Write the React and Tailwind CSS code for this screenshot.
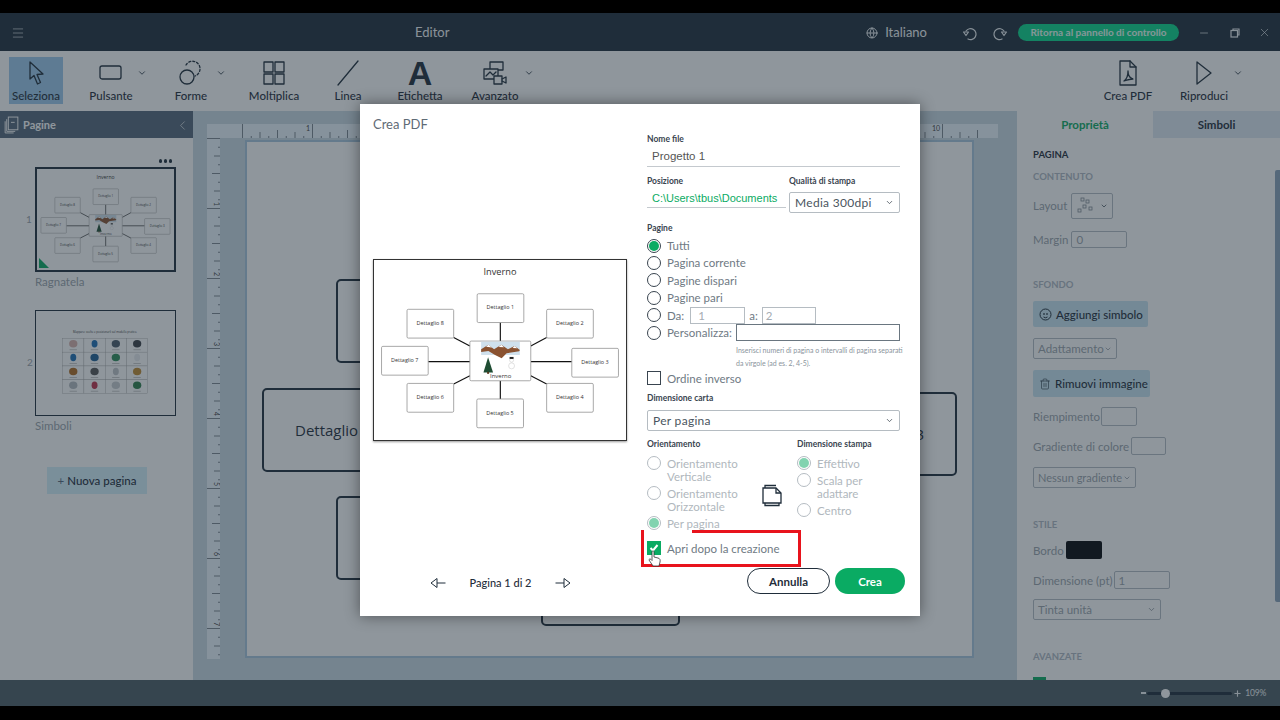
import { ChevronDown, ChevronLeft, Menu, Minus, Plus, Trash2, X, Globe } from 'lucide-react';

const font = { fontFamily: 'Lato, "Noto Sans", sans-serif' };

// miniatura del diagramma: stessa grafica per anteprima e pannello pagine
const nodes = [
  ['Dettaglio 1', 351, 130],
  ['Dettaglio 2', 561, 177],
  ['Dettaglio 3', 637, 295],
  ['Dettaglio 4', 561, 401],
  ['Dettaglio 5', 350, 448],
  ['Dettaglio 6', 139, 401],
  ['Dettaglio 7', 62, 289],
  ['Dettaglio 8', 139, 177],
];

const links = [
  [421, 217, 421, 273],
  [561, 262, 513, 288],
  [637, 335, 513, 335],
  [561, 403, 513, 378],
  [421, 448, 421, 393],
  [280, 403, 329, 378],
  [203, 335, 329, 335],
  [280, 262, 329, 288],
];

const Diagram = () => (
  <svg viewBox="40 28 760 544" className="w-full h-full block">
    <rect x="40" y="28" width="760" height="544" fill="#fff" />
    <text x="420" y="74" textAnchor="middle" fontSize="28" fontFamily="Open Sans" fill="#333">Inverno</text>
    {links.map((l, i) => (
      <line key={i} x1={l[0]} y1={l[1]} x2={l[2]} y2={l[3]} stroke="#111" strokeWidth="3.5" />
    ))}
    {nodes.map(([t, x, y]) => (
      <g key={t}>
        <rect x={x} y={y} width="141" height="87" rx="4" fill="#fff" stroke="#888" strokeWidth="2.2" />
        <text x={x + 70} y={y + 47} textAnchor="middle" fontSize="16.5" fontFamily="Open Sans" fill="#333">{t}</text>
      </g>
    ))}
    <rect x="329" y="273" width="184" height="120" rx="4" fill="#fff" stroke="#888" strokeWidth="2.2" />
    <rect x="363" y="275" width="117" height="40" fill="#cfe0ec" />
    <path d="M363 298 L385 284 L402 298 L424 284 L444 298 L464 288 L480 300 L478 304 L440 310 L425 325 L405 315 L385 303 L363 306 Z" fill="#8a5230" />
    <path d="M385 284 L378 290 L390 292 L396 293 Z M424 284 L416 291 L432 292 Z M464 288 L458 294 L472 295 Z" fill="#fff" />
    <path d="M384 322 L370 368 L399 368 Z" fill="#1f4d33" />
    <rect x="381" y="366" width="6" height="6" fill="#5a3a20" />
    <circle cx="455" cy="348" r="9" fill="#fff" stroke="#aaa" />
    <circle cx="455" cy="331" r="6" fill="#fff" stroke="#aaa" />
    <rect x="449" y="321" width="12" height="6" fill="#222" />
    <text x="422" y="384" textAnchor="middle" fontSize="18" fontFamily="Open Sans" fill="#333">Inverno</text>
  </svg>
);

const symbolColors = [
  '#d8b0aa', '#1f6fb5', '#4a5a6a', '#3a3f45',
  '#1f6fb5', '#1f5f95', '#2f8f5a', '#e8ebef',
  '#b06a20', '#555555', '#c0c4c8', '#c08a30',
  '#b5bac0', '#c0304a', '#c8ccd0', '#2f7f4a',
];

const SymbolsThumb = () => (
  <svg viewBox="0 0 141 105" className="w-full h-full block">
    <rect width="141" height="105" fill="#fff" />
    <text x="70" y="22" textAnchor="middle" fontSize="2.8" fontFamily="Open Sans" fill="#333">Mappare: scelte e posizionarli sul modello pratico.</text>
    {symbolColors.map((c, i) => {
      const x = 27 + (i % 4) * 21.6;
      const y = 27.5 + Math.floor(i / 4) * 14;
      return (
        <g key={i}>
          <rect x={x} y={y} width="21.6" height="14" fill="#fff" stroke="#aaa" strokeWidth="0.4" />
          <ellipse cx={x + 10.8} cy={y + 5.5} rx={i % 3 === 1 ? 3 : 4.2} ry="3.8" fill={c} />
          <rect x={x + 7} y={y + 11.2} width="7.5" height="0.8" fill="#bbb" />
        </g>
      );
    })}
  </svg>
);

const topTicks = Array.from({ length: 85 }, (_, i) => i);
const sideTicks = Array.from({ length: 60 }, (_, i) => i);

const TopRuler = () => (
  <svg width="791" height="14" className="block bg-[#edf7ff]">
    {topTicks.map((i) => {
      const x = 35.5 + i * 8.75;
      const h = i % 8 === 0 ? 14 : i % 4 === 0 ? 8 : i % 2 === 0 ? 6 : 2;
      return <line key={i} x1={x} y1={14 - h} x2={x} y2="14" stroke="#4a5560" strokeWidth="0.7" />;
    })}
    {[1, 2, 3, 4, 5, 6, 7, 8, 9, 10].map((n) => (
      <text key={n} x={35 + n * 70 - 2} y="7" textAnchor="end" fontSize="7" fontFamily="Lato" fill="#444">{n}</text>
    ))}
  </svg>
);

const SideRuler = () => (
  <svg width="13" height="521" className="block bg-[#edf7ff]">
    {sideTicks.map((i) => {
      const y = 0.5 + i * 8.75;
      const w = i % 8 === 0 ? 13 : i % 4 === 0 ? 8 : i % 2 === 0 ? 6 : 2;
      return <line key={i} x1={13 - w} y1={y} x2="13" y2={y} stroke="#4a5560" strokeWidth="0.7" />;
    })}
    {[1, 2, 3, 4, 5, 6, 7].map((n) => (
      <text key={n} transform={`translate(7 ${n * 70 - 6}) rotate(90)`} fontSize="7" fontFamily="Lato" fill="#444">{n}</text>
    ))}
  </svg>
);

const Icon = ({ children, w = 30, h = 30 }) => (
  <svg width={w} height={h} viewBox={`0 0 ${w} ${h}`} fill="none" stroke="#1f2d3a" strokeWidth="1.3" strokeLinejoin="round" strokeLinecap="round">
    {children}
  </svg>
);

const Tool = ({ label, children, active, className = '' }) => (
  <div className={`w-[54px] h-[47px] mt-[6px] flex flex-col items-center shrink-0 ${active ? 'bg-[#9dc9ec]' : ''} ${className}`}>
    <div className="h-[31px] flex items-center justify-center">{children}</div>
    <div className="text-[11.5px] leading-[16px] font-medium whitespace-nowrap text-[#1f2d3a]">{label}</div>
  </div>
);

const Caret = ({ className = '' }) => (
  <div className={`w-[10px] h-[32px] mt-[6px] flex items-center justify-center shrink-0 ${className}`}>
    <ChevronDown size={10} strokeWidth={2} color="#1f2d3a" />
  </div>
);

const Toolbar = () => (
  <div className="h-[60px] bg-white flex shrink-0 pl-[9px] pr-[37px]">
    <Tool label="Seleziona" active>
      <Icon w={22} h={28}>
        <path d="M5 3 L5 20 L9 16.5 L12.5 25 L15.5 23.5 L12 15.5 L18 15 Z" />
      </Icon>
    </Tool>
    <Tool label="Pulsante" className="ml-[21px]">
      <Icon w={26} h={20}><rect x="2" y="3" width="21" height="13" rx="2" /></Icon>
    </Tool>
    <Caret className="ml-[-1px]" />
    <Tool label="Forme" className="ml-[17px]">
      <Icon w={26} h={28}>
        <circle cx="9" cy="18" r="7" />
        <path d="M8 6 A7.5 7.5 0 0 1 22 10 A7.5 7.5 0 0 1 17 17" strokeDasharray="2 2" />
      </Icon>
    </Tool>
    <Caret className="ml-[-2px]" />
    <Tool label="Moltiplica" className="ml-[21px]">
      <Icon w={24} h={26}>
        <rect x="2" y="2" width="9" height="10" />
        <rect x="13" y="2" width="9" height="10" />
        <rect x="2" y="14" width="9" height="10" />
        <rect x="13" y="14" width="9" height="10" />
      </Icon>
    </Tool>
    <Tool label="Linea" className="ml-[20px]">
      <Icon w={24} h={28}><path d="M2 26 L22 2" /></Icon>
    </Tool>
    <Tool label="Etichetta" className="ml-[18px]">
      <span className="text-[34px] leading-[30px] font-bold text-[#1f2d3a]" style={{ fontFamily: 'Liberation Sans' }}>A</span>
    </Tool>
    <Tool label="Avanzato" className="ml-[21px]">
      <Icon w={26} h={26}>
        <rect x="8" y="2" width="13" height="8" />
        <rect x="2" y="9" width="14" height="10" fill="#fff" />
        <path d="M4 16 L8 12 L11 15 L14 12" />
        <rect x="12" y="16" width="8" height="8" fill="#fff" />
        <path d="M20 19 L24 17 L24 23 L20 21" />
      </Icon>
    </Tool>
    <Caret className="ml-[2px]" />
    <Tool label="Crea PDF" className="ml-auto">
      <Icon w={20} h={28}>
        <path d="M2 2 L12 2 L18 8 L18 26 L2 26 Z" />
        <path d="M12 2 L12 8 L18 8" />
        <path d="M6 22 C9 20 10 15 10 12 C10 16 12 19 15 20 C12 20 9 21 6 22 Z" />
      </Icon>
    </Tool>
    <Tool label="Riproduci" className="ml-[22px]">
      <Icon w={20} h={26}><path d="M3 2 L17 13 L3 24 Z" /></Icon>
    </Tool>
    <Caret className="ml-[2px]" />
  </div>
);

const TitleBar = () => (
  <div className="h-[38px] bg-[#1f2d3a] flex items-center shrink-0 text-[#f4f6f8] pl-[11px] pt-[1px]">
    <Menu size={14} strokeWidth={1.2} color="#d8dde2" />
    <span className="ml-[390px] text-[13px]">Editor</span>
    <div className="ml-auto flex items-center">
      <Globe size={12} strokeWidth={2} color="#eef2f5" />
      <span className="ml-[7px] text-[13px]">Italiano</span>
      <div className="w-[35px]" />
      <Icon w={16} h={16}>
        <g stroke="#eef2f5" strokeWidth="1.2"><path d="M4 6 A5.5 5.5 0 1 1 6 14" /><path d="M1.5 7 L6.5 7 L4 10.5 Z" /></g>
      </Icon>
      <div className="w-[14px]" />
      <Icon w={16} h={16}>
        <g stroke="#eef2f5" strokeWidth="1.2"><path d="M12 6 A5.5 5.5 0 1 0 10 14" /><path d="M9.5 7 L14.5 7 L12 10.5 Z" /></g>
      </Icon>
      <div className="ml-[10px] w-[161px] h-[17px] rounded-full bg-[#08d78a] flex items-center justify-center text-[10px] font-bold text-[#eafff6] whitespace-nowrap">
        Ritorna al pannello di controllo
      </div>
      <Minus size={12} strokeWidth={1.4} color="#eef2f5" className="ml-[19px]" />
      <svg width="10" height="10" viewBox="0 0 10 10" fill="none" stroke="#eef2f5" strokeWidth="1.2" className="ml-[20px]">
        <rect x="1" y="2.5" width="6.5" height="6.5" />
        <path d="M3 2.5 V1 H9 V7 H7.5" />
      </svg>
      <X size={13} strokeWidth={1.2} color="#eef2f5" className="ml-[18px] mr-[9px]" />
    </div>
  </div>
);

const LeftPanel = () => (
  <div className="w-[193px] bg-white flex flex-col shrink-0">
    <div className="h-[27px] bg-[#55677a] flex items-center pl-[4px] pr-[3px] pt-[1px]">
      <svg width="15" height="18" viewBox="0 0 14 17" fill="none" stroke="#fff" strokeWidth="0.9">
        <rect x="4" y="1" width="9" height="12" />
        <path d="M2.5 3 V14.5 H10.5 M1 5 V16 H9" />
        <path d="M6.5 6 H10" />
      </svg>
      <span className="ml-[4px] text-[11px] font-bold text-white">Pagine</span>
      <ChevronLeft size={15} strokeWidth={1} color="#fff" className="ml-auto" />
    </div>
    <div className="flex flex-col pl-[35px] pt-[20px]">
      <div className="self-end mr-[21px] flex gap-[1.5px] h-[6px] items-center">
        <span className="w-[3.5px] h-[3.5px] rounded-full bg-[#1f2d3a]" />
        <span className="w-[3.5px] h-[3.5px] rounded-full bg-[#1f2d3a]" />
        <span className="w-[3.5px] h-[3.5px] rounded-full bg-[#1f2d3a]" />
      </div>
      <div className="relative w-[141px] h-[105px] mt-[3px] border-[2.5px] border-[#1f2d3a]">
        <Diagram />
        <span className="absolute left-[-11px] top-[44px] text-[10px] leading-[12px] text-[#9aa3ab]">1</span>
        <svg width="10" height="10" className="absolute left-[2px] bottom-[2px]"><path d="M0 0 L10 10 L0 10 Z" fill="#0aab63" /></svg>
      </div>
      <div className="mt-[2px] text-[11.5px] leading-[15px] text-[#9aa3ab]">Ragnatela</div>
      <div className="relative w-[141px] h-[106px] mt-[21px] border border-[#1f2d3a]">
        <SymbolsThumb />
        <span className="absolute left-[-9px] top-[45px] text-[10px] leading-[12px] text-[#9aa3ab]">2</span>
      </div>
      <div className="mt-[2px] text-[11.5px] leading-[15px] text-[#9aa3ab]">Simboli</div>
      <div className="ml-[12px] mt-[34px] w-[100px] h-[27px] bg-[#d5f0fb] flex items-center justify-center text-[11.5px] font-medium text-[#1f2d3a]">
        <span className="font-normal mr-[3px] text-[#55677a]">+</span> Nuova pagina
      </div>
    </div>
  </div>
);

const CanvasBox = ({ className = '', children }) => (
  <div className={`absolute border-2 border-[#1f2d3a] rounded-[5px] flex items-center justify-center text-[15px] text-[#1f2d3a] ${className}`} style={{ fontFamily: 'Open Sans' }}>
    {children}
  </div>
);

const Canvas = () => (
  <div className="flex-1 bg-[#cbdbe4] overflow-hidden pl-[14px] pt-[13px]">
    <TopRuler />
    <div className="flex items-start">
      <SideRuler />
      <div className="relative ml-[25px] mt-[2px] w-[729px] h-[518px] bg-white border-2 border-[#a9c6de]">
        <CanvasBox className="left-[89px] top-[137px] w-[200px] h-[84px]" />
        <CanvasBox className="left-[15px] top-[246px] w-[200px] h-[84px] justify-start pl-[31px]">Dettaglio 7</CanvasBox>
        <CanvasBox className="left-[89px] top-[354px] w-[200px] h-[84px]" />
        <CanvasBox className="left-[294px] top-[400px] w-[139px] h-[84px]" />
        <CanvasBox className="left-[510px] top-[250px] w-[200px] h-[84px] justify-end pr-[31px]">Dettaglio 3</CanvasBox>
      </div>
    </div>
  </div>
);

const SectionTitle = ({ children, className = '' }) => (
  <div className={`text-[9.5px] leading-[12px] font-bold text-[#b0b9c4] ${className}`}>{children}</div>
);

const Field = ({ className = '', children }) => (
  <div className={`border border-[#b5bcc4] rounded-[2px] flex items-center px-[4px] text-[11.5px] text-[#9aa3ab] ${className}`}>{children}</div>
);

const Row = ({ label, className = '', children }) => (
  <div className={`flex items-center text-[11.5px] text-[#9aa3ab] ${className}`}>
    <span className="whitespace-nowrap">{label}</span>
    {children}
  </div>
);

const RightPanel = () => (
  <div className="w-[263px] bg-white flex flex-col shrink-0 relative overflow-hidden">
    <div className="flex h-[27px] text-[11.5px] font-bold shrink-0">
      <div className="w-[136px] flex items-center justify-center text-[#0aab63]">Proprietà</div>
      <div className="flex-1 bg-[#dfe9f2] flex items-center justify-center text-[#1f2d3a]">Simboli</div>
    </div>
    <div className="pl-[16px] pt-[11px]">
      <div className="text-[9.5px] leading-[12px] font-bold text-[#1f2d3a]">PAGINA</div>
      <SectionTitle className="mt-[10px]">CONTENUTO</SectionTitle>
      <Row label="Layout" className="mt-[10px]">
        <Field className="ml-[4px] w-[42px] h-[26px] justify-between">
          <svg width="18" height="18" viewBox="0 0 18 18" fill="none" stroke="#7d8791" strokeWidth="0.8">
            <rect x="5" y="1" width="3" height="3" /><rect x="10" y="3" width="3" height="3" />
            <rect x="7" y="8" width="3" height="3" /><rect x="13" y="10" width="3" height="3" /><rect x="2" y="12" width="3" height="3" />
          </svg>
          <ChevronDown size={8} strokeWidth={2} color="#1f2d3a" />
        </Field>
      </Row>
      <Row label="Margin" className="mt-[12px]">
        <Field className="ml-[3px] w-[56px] h-[17px]">0</Field>
      </Row>
    </div>
    <div className="mt-[13px] h-px bg-[#dde2e6]" />
    <div className="pl-[16px]">
      <SectionTitle className="mt-[18px]">SFONDO</SectionTitle>
      <div className="mt-[10px] w-[115px] h-[26px] bg-[#c9e5f2] rounded-[2px] flex items-center pl-[6px] text-[11.5px] font-medium text-[#1f2d3a]">
        <svg width="13" height="15" viewBox="0 0 13 15" fill="none" stroke="#1f2d3a" strokeWidth="1">
          <circle cx="6.5" cy="7.5" r="5.5" /><circle cx="5" cy="7" r="0.5" /><circle cx="8" cy="7" r="0.5" /><path d="M4.5 10 Q6.5 11.5 8.5 10" />
        </svg>
        <span className="ml-[4px]">Aggiungi simbolo</span>
      </div>
      <Field className="mt-[11px] w-[84px] h-[21px] justify-between">Adattamento<ChevronDown size={8} strokeWidth={2} color="#7d8791" /></Field>
      <div className="mt-[11px] w-[117px] h-[27px] bg-[#c9e5f2] rounded-[2px] flex items-center pl-[6px] text-[11.5px] font-medium text-[#1f2d3a]">
        <Trash2 size={12} strokeWidth={1.2} color="#1f2d3a" />
        <span className="ml-[4px]">Rimuovi immagine</span>
      </div>
      <Row label="Riempimento" className="mt-[10px]">
        <Field className="ml-[1px] w-[36px] h-[19px]" />
      </Row>
      <Row label="Gradiente di colore" className="mt-[11px]">
        <Field className="ml-[2px] w-[35px] h-[18px]" />
      </Row>
      <Field className="mt-[12px] w-[103px] h-[21px] justify-between whitespace-nowrap !text-[11px]">Nessun gradiente<ChevronDown size={8} strokeWidth={2} color="#7d8791" /></Field>
    </div>
    <div className="mt-[13px] h-px bg-[#bcc3ca]" />
    <div className="pl-[16px]">
      <SectionTitle className="mt-[18px]">STILE</SectionTitle>
      <Row label="Bordo" className="mt-[10px]">
        <div className="ml-[2px] w-[36px] h-[18px] rounded-[2px] bg-[#030509]" />
      </Row>
      <Row label="Dimensione (pt)" className="mt-[12px]">
        <Field className="ml-[1px] w-[56px] h-[18px]">1</Field>
      </Row>
      <Field className="mt-[10px] w-[128px] h-[21px] justify-between">Tinta unità<ChevronDown size={9} strokeWidth={2} color="#7d8791" /></Field>
    </div>
    <div className="mt-[14px] h-px bg-[#bcc3ca]" />
    <div className="pl-[16px]">
      <SectionTitle className="mt-[17px]">AVANZATE</SectionTitle>
      <div className="mt-[14px] w-[13px] h-[13px] bg-[#0aab63]" />
    </div>
    <div className="absolute right-0 top-[59px] w-[5px] h-[432px] bg-[#8ba3ba] rounded-l-[2px]" />
  </div>
);

const BottomBar = () => (
  <div className="h-[26px] bg-[#4d5d64] flex items-center justify-end shrink-0 pr-[14px]">
    <span className="w-[5px] h-[2px] bg-[#eef2f5]" />
    <div className="relative ml-[1px] w-[85px] h-[3px] bg-[#1f2d3a] rounded-full">
      <span className="absolute left-[14px] top-[-3px] w-[9px] h-[9px] rounded-full bg-white" />
    </div>
    <Plus size={9} strokeWidth={3} color="#eef2f5" className="ml-[1px]" />
    <span className="ml-[3px] text-[8.5px] tracking-[-0.2px] text-[#eef2f5]">109%</span>
  </div>
);

const Label = ({ children, className = '' }) => (
  <div className={`text-[8.5px] leading-[12px] font-bold text-[#39444f] whitespace-nowrap ${className}`}>{children}</div>
);

const Radio = ({ on, off }) => (
  <span className={`w-[14px] h-[14px] rounded-full border flex items-center justify-center shrink-0 ${off ? 'border-[#b5bcc2]' : 'border-[#39444f]'}`}>
    {on && <span className={`w-[10px] h-[10px] rounded-full ${off ? 'bg-[#82d3b0]' : 'bg-[#0aab63]'}`} />}
  </span>
);

const RadioRow = ({ on, children, className = '' }) => (
  <div className={`h-[17.4px] flex items-center gap-[6px] text-[11.5px] text-[#6f7a84] whitespace-nowrap ${className}`}>
    <Radio on={on} />
    {children}
  </div>
);

const DisabledRadio = ({ on, lines, className = '' }) => (
  <div className={`flex gap-[6px] text-[11.5px] leading-[13px] text-[#b0b7bd] ${className}`}>
    <Radio on={on} off />
    <div className="whitespace-nowrap pt-[1px]">
      {lines.map((l) => <div key={l}>{l}</div>)}
    </div>
  </div>
);

const Select = ({ children, className = '' }) => (
  <div className={`h-[21px] border border-[#b5bcc2] rounded-[2px] flex items-center justify-between px-[5px] text-[12px] tracking-[0.3px] text-[#4a5560] ${className}`}>
    {children}
    <ChevronDown size={9} strokeWidth={2} color="#39444f" />
  </div>
);

const PagerArrow = ({ flip }) => (
  <svg width="16" height="12" viewBox="0 0 16 12" fill="none" stroke="#1f2d3a" strokeWidth="1" className={flip ? '-scale-x-100' : ''}>
    <path d="M1 6 L7 1.5 L7 10.5 Z M7 6 H15.5" />
  </svg>
);

const Dialog = () => (
  <div className="absolute left-[360px] top-[104px] w-[560px] h-[512px] bg-white flex shadow-[0_0_14px_rgba(0,0,0,0.45)]">
    <div className="w-[287px] shrink-0 pl-[13px] flex flex-col">
      <div className="mt-[12px] text-[13px] leading-[17px] text-[#5f6b76]">Crea PDF</div>
      <div className="mt-[126px] w-[254px] h-[182px] border border-[#333] shadow-[0_1px_2px_rgba(0,0,0,0.4)]">
        <Diagram />
      </div>
      <div className="mt-[134px] ml-[57px] w-[141px] flex items-center justify-between text-[11px] font-medium text-[#1f2d3a]">
        <PagerArrow />
        <span>Pagina 1 di 2</span>
        <PagerArrow flip />
      </div>
    </div>
    <div className="w-[253px] shrink-0 pt-[29px]">
      <Label>Nome file</Label>
      <div className="h-[22px] pl-[5px] pt-[2px] border-b border-[#c4c9ce] flex items-center text-[11.5px] text-[#555]" style={{ fontFamily: 'Liberation Sans' }}>Progetto 1</div>
      <div className="flex mt-[8px]">
        <div className="w-[139px]">
          <Label>Posizione</Label>
          <div className="h-[21px] pl-[5px] pt-[2px] border-b border-[#c4c9ce] flex items-center text-[11px] text-[#0aab63] whitespace-nowrap" style={{ fontFamily: 'Liberation Sans' }}>C:\Users\tbus\Documents</div>
        </div>
        <div className="ml-[3px] w-[111px]">
          <Label>Qualità di stampa</Label>
          <Select className="mt-[5px]">Media 300dpi</Select>
        </div>
      </div>
      <Label className="mt-[9px]">Pagine</Label>
      <div className="mt-[3px]">
        <RadioRow on>Tutti</RadioRow>
        <RadioRow>Pagina corrente</RadioRow>
        <RadioRow>Pagine dispari</RadioRow>
        <RadioRow>Pagine pari</RadioRow>
        <RadioRow>
          Da:
          <span className="w-[55px] h-[17px] border border-[#b5bcc2] pl-[7px] text-[#a5acb3] leading-[15px]">1</span>
          <span className="ml-[-2px]">a:</span>
          <span className="ml-[-2px] w-[54px] h-[17px] border border-[#b5bcc2] pl-[3px] text-[#a5acb3] leading-[15px]">2</span>
        </RadioRow>
        <RadioRow>
          Personalizza:
          <span className="ml-[-2px] w-[164px] h-[17px] border border-[#6a7680]" />
        </RadioRow>
      </div>
      <div className="ml-[89px] mt-[3px] text-[7px] leading-[13px] text-[#8a949d] whitespace-nowrap">
        Inserisci numeri di pagina o intervalli di pagina separati<br />da virgole (ad es. 2, 4-5).
      </div>
      <div className="mt-[1px] h-[14px] flex items-center gap-[6px] text-[11.5px] text-[#6f7a84]">
        <span className="w-[14px] h-[14px] border border-[#39444f]" />
        Ordine inverso
      </div>
      <Label className="mt-[7px]">Dimensione carta</Label>
      <Select className="mt-[6px]">Per pagina</Select>
      <div className="flex mt-[7px]">
        <div className="w-[150px]">
          <Label>Orientamento</Label>
          <DisabledRadio lines={['Orientamento', 'Verticale']} className="mt-[6px]" />
          <DisabledRadio lines={['Orientamento', 'Orizzontale']} className="mt-[3px]" />
          <DisabledRadio on lines={['Per pagina']} className="mt-[3px]" />
        </div>
        <div>
          <Label>Dimensione stampa</Label>
          <DisabledRadio on lines={['Effettivo']} className="mt-[6px]" />
          <DisabledRadio lines={['Scala per', 'adattare']} className="mt-[3px]" />
          <DisabledRadio lines={['Centro']} className="mt-[3px]" />
        </div>
      </div>
      <div className="mt-[11px] h-[14px] flex items-center gap-[6px] text-[11.5px] text-[#6f7a84]">
        <span className="w-[14px] h-[14px] bg-[#0aab63] flex items-center justify-center">
          <svg width="10" height="10" viewBox="0 0 10 10" fill="none" stroke="#fff" strokeWidth="2"><path d="M1.5 5 L4 7.5 L8.5 2" /></svg>
        </span>
        Apri dopo la creazione
      </div>
      <div className="mt-[13px] w-[258px] flex justify-end gap-[5px] text-[11.5px] font-bold">
        <div className="w-[83px] h-[26px] border border-[#1f2d3a] rounded-full flex items-center justify-center text-[#1f2d3a]">Annulla</div>
        <div className="w-[70px] h-[26px] bg-[#0aab63] rounded-full flex items-center justify-center text-white">Crea</div>
      </div>
    </div>
    {/* evidenziazione rossa del tutorial */}
    <div className="absolute left-[281px] top-[426px] w-[160px] h-[37px] border-[3px] border-[#e8131c] border-t-0" />
    <div className="absolute left-[332px] top-[426px] w-[109px] h-[3px] bg-[#e8131c]" />
    <svg width="14" height="17" viewBox="0 0 14 17" className="absolute left-[288px] top-[446px]" fill="#fff" stroke="#333" strokeWidth="0.8">
      <path d="M4 1.5 C5 0.5 6 1 6 2 L6 7 L10 8 C12 8.5 12.5 10 12 12 L11 16 L5 16 L1 10 C1 9 2 8.5 3 9.5 L4 10.5 Z" />
    </svg>
    <svg width="22" height="23" viewBox="0 0 22 23" fill="none" stroke="#1f2d3a" strokeWidth="1.3" className="absolute left-[401px] top-[380px]">
      <path d="M2 4 H15 L20 9 V19 H2 Z" />
      <path d="M15 4 V9 H20" />
      <path d="M4 4 V1.5 H15 M4 19 V21.5 H18 V19" />
    </svg>
  </div>
);

export default function App() {
  return (
    <div className="relative w-[1280px] h-[720px] overflow-hidden bg-black flex flex-col" style={font}>
      <div className="h-[13px] shrink-0 bg-black" />
      <TitleBar />
      <Toolbar />
      <div className="flex h-[569px] shrink-0">
        <LeftPanel />
        <Canvas />
        <RightPanel />
      </div>
      <BottomBar />
      <div className="h-[14px] bg-black" />
      <div className="absolute left-0 top-[13px] w-full h-[693px] bg-[#1f2d3a]/50" />
      <Dialog />
    </div>
  );
}
